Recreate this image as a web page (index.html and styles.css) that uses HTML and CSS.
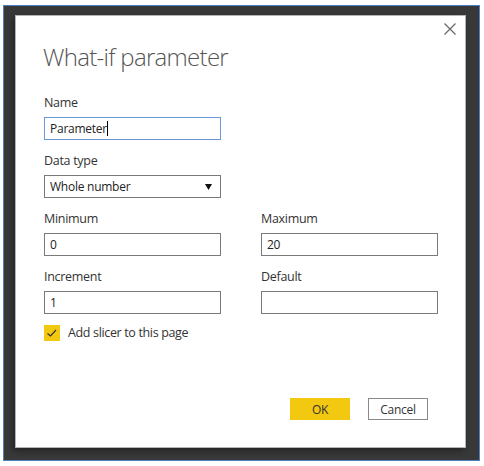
FILE: index.html
```html
<!DOCTYPE html>
<html lang="en">
<head>
    <meta charset="UTF-8">
    <title>What-if parameter</title>
    <link rel="stylesheet" href="styles.css">
</head>
<body>
    <div class="frame">
        <div class="dialog">
            <button class="close" aria-label="Close">
                <svg width="12" height="12" viewBox="0 0 12 12"><path d="M0.5 0.5 L11.5 11.5 M11.5 0.5 L0.5 11.5" stroke="#666" stroke-width="1.2" fill="none"/></svg>
            </button>
            <h1 class="title">What-if parameter</h1>

            <div class="row">
                <div class="field">
                    <label>Name</label>
                    <div class="input focused">Parameter<span class="caret"></span></div>
                </div>
            </div>
            <div class="row">
                <div class="field">
                    <label>Data type</label>
                    <div class="input select">
                        <span>Whole number</span>
                        <svg width="7" height="6" viewBox="0 0 7 6"><path d="M0 0 L7 0 L3.5 6 Z" fill="#111"/></svg>
                    </div>
                </div>
            </div>
            <div class="row">
                <div class="field">
                    <label>Minimum</label>
                    <div class="input">0</div>
                </div>
                <div class="field">
                    <label>Maximum</label>
                    <div class="input">20</div>
                </div>
            </div>
            <div class="row">
                <div class="field">
                    <label>Increment</label>
                    <div class="input">1</div>
                </div>
                <div class="field">
                    <label>Default</label>
                    <div class="input"></div>
                </div>
            </div>

            <div class="check">
                <span class="box">
                    <svg width="16" height="16" viewBox="0 0 16 16"><path d="M3.5 8.5 L6.5 11 L12 5" stroke="#333" stroke-width="1.2" fill="none"/></svg>
                </span>
                <span>Add slicer to this page</span>
            </div>

            <div class="buttons">
                <button class="btn ok">OK</button>
                <button class="btn cancel">Cancel</button>
            </div>
        </div>
    </div>
</body>
</html>
```

FILE: styles.css
```css
body {
    margin: 0;
    background: #fff;
    font-family: "Open Sans", sans-serif;
    color: #333;
}

.frame {
    box-sizing: border-box;
    width: 477px;
    height: 456px;
    margin: 5px 0 0 3px;
    border: 1px solid #4f7fc1;
    background: #383838;
    padding: 9px 13px 10px 11px;
    display: flex;
}

.dialog {
    box-sizing: border-box;
    position: relative;
    width: 451px;
    height: 433px;
    background: #fff;
    border: 1px solid #b4b4b4;
    box-shadow: -2px 3px 6px rgba(0, 0, 0, 0.35);
    padding: 25px 27px 27px 28px;
    display: flex;
    flex-direction: column;
}

.close {
    position: absolute;
    top: 7px;
    right: 9px;
    border: none;
    background: none;
    padding: 0;
    line-height: 0;
}

.title {
    margin: 0 0 9px -1px;
    font-size: 24px;
    line-height: 32px;
    font-weight: 300;
    letter-spacing: -0.7px;
    color: #555;
}

.row {
    display: flex;
    gap: 40px;
}

.field {
    width: 177px;
    margin-top: 12px;
}

.field label {
    display: block;
    font-size: 12.5px;
    letter-spacing: -0.3px;
    line-height: 16px;
    padding-top: 1px;
    margin-bottom: 6px;
}

.input {
    box-sizing: border-box;
    height: 23px;
    border: 1px solid #7a7a7a;
    padding: 0 5px;
    font-size: 12px;
    letter-spacing: -0.25px;
    line-height: 21px;
    color: #222;
    display: flex;
    align-items: center;
}

.input.focused {
    border-color: #6d98d8;
}

.caret {
    display: inline-block;
    width: 1px;
    height: 15px;
    background: #000;
}

.select {
    justify-content: space-between;
    padding-right: 8px;
}

.check {
    display: flex;
    align-items: center;
    gap: 8px;
    margin-top: 11px;
    font-size: 12.5px;
    letter-spacing: -0.35px;
    line-height: 16px;
}

.box {
    width: 16px;
    height: 16px;
    background: #f2c811;
    line-height: 0;
}

.buttons {
    margin-top: auto;
    margin-right: 10px;
    display: flex;
    justify-content: flex-end;
    gap: 18px;
}

.btn {
    box-sizing: border-box;
    width: 60px;
    height: 22px;
    font-family: "Open Sans", sans-serif;
    font-size: 12px;
    letter-spacing: -0.25px;
    color: #333;
    padding: 0;
}

.ok {
    background: #f2c811;
    border: none;
}

.cancel {
    background: #fff;
    border: 1px solid #8a8a8a;
}
```
